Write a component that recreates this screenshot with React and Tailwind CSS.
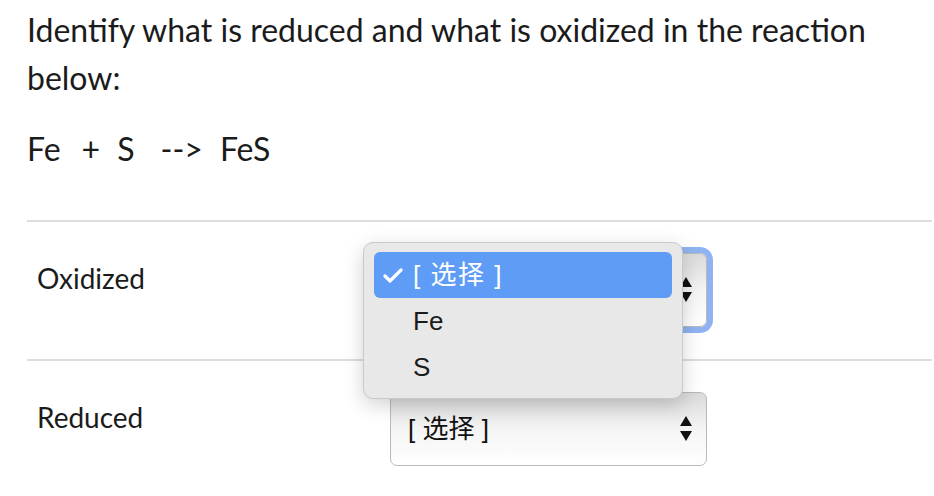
import { useState } from "react";

const options = ["[ 选择 ]", "Fe", "S"];

const Arrows = () => (
  <svg width="12" height="26" viewBox="0 0 12 26" className="shrink-0">
    <polygon points="6,0 12,10 0,10" fill="#111" />
    <polygon points="0,15 12,15 6,25" fill="#111" />
  </svg>
);

const SelectBox = ({ value, focused }) => (
  <div
    className={
      focused
        ? "w-[317px] h-[74px] rounded-[7px] border border-[#b9b9b9] bg-gradient-to-b from-[#dadada] via-[#f4f4f4] to-white flex items-center justify-between pl-[17px] pr-[14px] shadow-[0_0_0_6px_#8fb3f2]"
        : "w-[317px] h-[74px] rounded-[7px] border border-[#b9b9b9] bg-gradient-to-b from-[#dadada] via-[#f4f4f4] to-white flex items-center justify-between pl-[17px] pr-[14px]"
    }
  >
    <span className="text-[26px] text-[#111] font-['Liberation_Sans','Noto_Sans_CJK_SC',sans-serif]">
      {value}
    </span>
    <Arrows />
  </div>
);

const Row = ({ label, value, focused }) => (
  <div className="flex border-t-2 border-[#dddddd] pt-[31px] pb-[32px]">
    <div className="w-[363px] pl-[10px] pt-[4px] text-[28px] leading-[42px]">{label}</div>
    <SelectBox value={value} focused={focused} />
  </div>
);

const App = () => {
  const [selected] = useState(0);

  return (
    <div className="relative w-[934px] h-[496px] overflow-hidden bg-white text-[#1b1b1b] font-['Lato',sans-serif]">
      <div className="pl-[27px] pr-[2px] pt-[6px]">
        <p className="text-[32px] leading-[48px]">
          Identify what is reduced and what is oxidized in the reaction below:
        </p>
        <p className="text-[32px] leading-[48px] mt-[23px] flex">
          <span>Fe</span>
          <span className="ml-[21px]">+</span>
          <span className="ml-[17px]">S</span>
          <span className="ml-[26px]">--&gt;</span>
          <span className="ml-[17px]">FeS</span>
        </p>
        <div className="mt-[47px]">
          <Row label="Oxidized" value="[ 选择 ]" focused />
          <Row label="Reduced" value="[ 选择 ]" />
        </div>
      </div>

      {/* open menu of the first select */}
      <div className="absolute left-[363px] top-[242px] w-[320px] h-[157px] rounded-[10px] bg-[#e8e8e8] border border-[#c9c9c9] shadow-[0_6px_20px_rgba(0,0,0,0.18)] px-[10px] pt-[9px] font-['Liberation_Sans','Noto_Sans_CJK_SC',sans-serif] text-[26px]">
        {options.map((opt, i) => (
          <div
            key={opt}
            className={
              i === selected
                ? "h-[46px] rounded-[6px] bg-[#5e9cf6] text-white flex items-center"
                : "h-[46px] text-[#1b1b1b] flex items-center"
            }
          >
            <span className="w-[39px] pl-[9px] flex">
              {i === selected && (
                <svg width="20" height="15" viewBox="0 0 20 15">
                  <polyline points="2,8 7,13 18,2" fill="none" stroke="white" strokeWidth="3.2" strokeLinecap="round" strokeLinejoin="round" />
                </svg>
              )}
            </span>
            <span className={i === selected ? "tracking-[1.5px]" : ""}>{opt}</span>
          </div>
        ))}
      </div>
    </div>
  );
};

export default App;
